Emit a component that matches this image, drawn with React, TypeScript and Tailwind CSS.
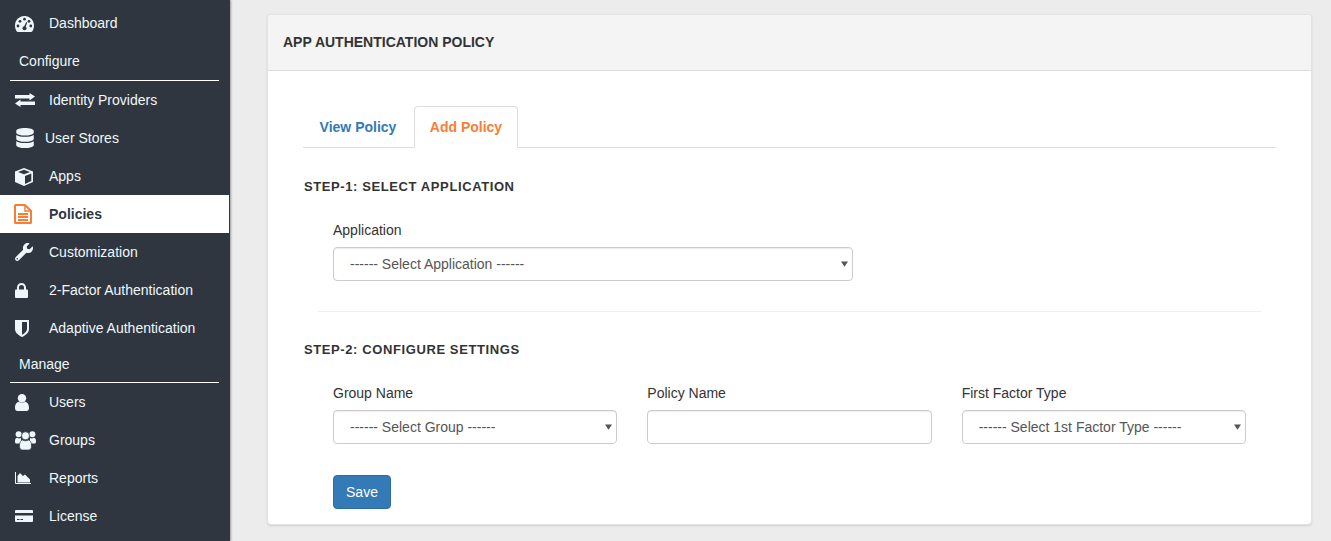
import React from "react";
import { FaDatabase, FaWrench } from "react-icons/fa";

const D = "#2f363f";
const W = "#eef8fc";
const O = "#f97d35";

const Gauge = () => (
  <svg width="19" height="16" viewBox="0 0 19 16" className="mt-[2px]" fill={W}>
    <path d="M9.5 0C15 0 19 4.4 19 9.5c0 2-.5 4-1.6 5.7-.3.5-.8.8-1.4.8H3c-.6 0-1.100-.3-1.400-.8C.5 13.500 0 11.500 0 9.500 0 4.400 4 0 9.500 0Z" />
    <g fill={D}>
      <circle cx="3" cy="10" r="1.400" />
      <circle cx="5" cy="5.300" r="1.400" />
      <circle cx="9.500" cy="3.200" r="1.400" />
      <circle cx="15.800" cy="10" r="1.400" />
      <circle cx="14" cy="5.300" r="1.400" />
      <circle cx="9.500" cy="12.300" r="2" />
      <path d="M8.700 11.500 11.200 6l1 .4-1.900 5.700Z" />
    </g>
  </svg>
);
const Exchange = () => (
  <svg width="20" height="14" viewBox="0 0 20 14" fill={W}>
    <path d="M0 2h14.500V0L20 3.500 14.500 7.500V5.500H0Z" />
    <path d="M20 8.500H5.500V6.500L0 10.500 5.500 14V12H20Z" />
  </svg>
);
const Cube = () => (
  <svg width="18" height="18" viewBox="0 0 18 18" className="mt-[2px]">
    <path fill={W} d="M9 0 18 3.500V14L9 18 0 14V3.500Z" />
    <path fill={D} d="M9 1.700 15 4 9 6.300 3 4ZM10 8l6.300-2.500V13L10 16Z" />
  </svg>
);
const FileDoc = () => (
  <svg width="18" height="20" viewBox="0 0 18 20" fill="none" stroke={O} strokeWidth="2">
    <path d="M1 1.500a.5.5 0 0 1 .5-.5H11l6 6v11.500a.5.5 0 0 1-.5.5h-15a.5.5 0 0 1-.5-.5Z" fill="#fff" />
    <path d="M11 1v6h6" strokeWidth="1.500" />
    <path d="M4 10h10M4 13h10M4 16h10" strokeWidth="2" />
  </svg>
);
const Lock = () => (
  <svg width="13" height="15" viewBox="0 0 13 15" fill={W}>
    <path d="M3 7V4.500a3.500 3.500 0 0 1 7 0V7" fill="none" stroke={W} strokeWidth="2" />
    <rect x="0" y="6.500" width="13" height="8.500" rx="1" />
  </svg>
);
const Shield = () => (
  <svg width="14" height="17" viewBox="0 0 14 17" className="mt-[1px]">
    <path fill={W} d="M0 0H14V9C14 13 10 15.500 7 17 4 15.500 0 13 0 9Z" />
    <path fill={D} d="M7 2H12V9C12 11.500 9.500 13.500 7 14.800Z" />
  </svg>
);
const User = () => (
  <svg width="14" height="17" viewBox="0 0 14 17" fill={W} className="mt-[1px]">
    <circle cx="7" cy="4.200" r="4.200" />
    <path d="M0 14C0 10 2 8 4 7.800 5 9 9 9 10 7.800 12 8 14 10 14 14 14 16 13 17 11.500 17H2.500C1 17 0 16 0 14Z" />
  </svg>
);
const Users = () => (
  <svg width="21" height="19" viewBox="0 0 21 19" fill={W} className="mt-[1px]">
    <circle cx="3.600" cy="3.200" r="3" />
    <circle cx="17.400" cy="3.200" r="3" />
    <path d="M0 10C0 8 1 6.800 2.500 6.800 3.500 7.600 4.500 7.600 6 7L6 12.500H1.500C.5 12.500 0 11.800 0 11Z" />
    <path d="M21 10C21 8 20 6.800 18.500 6.800 17.500 7.600 16.500 7.600 15 7L15 12.500H19.500C20.500 12.500 21 11.800 21 11Z" />
    <circle cx="10.500" cy="4.800" r="4" stroke={D} strokeWidth=".7" />
    <path d="M4.500 15C4.500 11 6 9 7.500 9 9 10 12 10 13.500 9 15 9 16.500 11 16.500 15 16.500 17.500 15.500 19 13.500 19H7.500C5.500 19 4.500 17.500 4.500 15Z" stroke={D} strokeWidth=".7" />
  </svg>
);
const Chart = () => (
  <svg width="16" height="12" viewBox="0 0 16 12" fill={W}>
    <path d="M.5 0V11.500H16" fill="none" stroke={W} strokeWidth="1" />
    <path d="M2.500 10.500V4L5 1 8 4 10 2.500 15 7.500V10.500Z" />
  </svg>
);
const Card = () => (
  <svg width="18" height="12" viewBox="0 0 18 12" fill={W}>
    <path d="M0 1a1 1 0 0 1 1-1H17a1 1 0 0 1 1 1V3H0Z" />
    <path d="M0 5.500H18V11a1 1 0 0 1-1 1H1a1 1 0 0 1-1-1Z" />
    <path d="M2 9.500H4.500M5.500 9.500H8" stroke={D} strokeWidth="1" />
  </svg>
);

function Item({ icon, label, active, slot }: { icon: React.ReactNode; label: string; active?: boolean; slot?: string }) {
  return (
    <div className={`h-[38px] flex items-center ${active ? "bg-white font-bold text-[#2f363f]" : "text-[#eef8fc]"}`}>
      <span className={`shrink-0 flex items-center ${slot ?? "w-[49px] pl-[15px]"}`}>{icon}</span>
      <span>{label}</span>
    </div>
  );
}

function Heading({ label, className }: { label: string; className: string }) {
  return (
    <div className={`mx-[10px] pl-[9px] border-b border-white flex items-center text-[#eef8fc] ${className}`}>{label}</div>
  );
}

function SelectBox({ text, className }: { text: string; className?: string }) {
  return (
    <div className={`relative ${className ?? ""}`}>
      <select defaultValue="" className="appearance-none w-full h-[34px] bg-white border border-[#ccc] rounded-[4px] pl-[16px] pr-6 text-[14px] text-[#555] outline-none shadow-[inset_0_1px_1px_rgba(0,0,0,0.075)]">
        <option value="">{text}</option>
      </select>
      <svg viewBox="0 0 8 6" className="absolute right-[5px] top-[14px] w-[7px] h-[6px] fill-[#555] pointer-events-none">
        <path d="M0 0H8L4 6Z" />
      </svg>
    </div>
  );
}

function Field({ label, children }: { label: string; children: React.ReactNode }) {
  return (
    <div>
      <label className="block h-[20px] mb-[7px] leading-[20px] text-[14px] text-[#333]">{label}</label>
      {children}
    </div>
  );
}

export default function App() {
  return (
    <div className="h-[541px] w-[1331px] overflow-hidden flex bg-[#ececec] text-[14px] leading-[20px] text-[#333] font-['Liberation_Sans',Arial,sans-serif]">
      <aside className="w-[230px] shrink-0 h-full bg-[#2f363f] pt-[4px] border-r border-[#2f363f] shadow-[1px_0_2px_rgba(0,0,0,0.35)]">
        <Item icon={<Gauge />} label="Dashboard" />
        <Heading label="Configure" className="h-[39px]" />
        <Item icon={<Exchange />} label="Identity Providers" />
        <Item icon={<FaDatabase size={20} />} label="User Stores" slot="w-[45px] pl-[15px]" />
        <Item icon={<Cube />} label="Apps" />
        <Item icon={<FileDoc />} label="Policies" active slot="w-[49px] pl-[14px]" />
        <Item icon={<FaWrench size={18} />} label="Customization" />
        <Item icon={<Lock />} label="2-Factor Authentication" />
        <Item icon={<Shield />} label="Adaptive Authentication" />
        <Heading label="Manage" className="h-[36px] pb-[2px]" />
        <Item icon={<User />} label="Users" />
        <Item icon={<Users />} label="Groups" />
        <Item icon={<Chart />} label="Reports" />
        <Item icon={<Card />} label="License" />
      </aside>
      <main className="flex-1 pl-[37px] pr-[19px] pt-[14px]">
        <div className="h-[511px] bg-white rounded-[4px] border border-[#e3e3e3] shadow-[0_1px_2px_rgba(0,0,0,0.12)] overflow-hidden">
          <div className="h-[56px] bg-[#f4f4f4] border-b border-[#ddd] px-[15px] pb-[2px] flex items-center">
            <h1 className="font-bold text-[#333] text-[14px] uppercase">App Authentication Policy</h1>
          </div>
          <div className="px-[35px] pt-[35px]">
            <div className="flex h-[42px] border-b border-[#ddd] pl-[1px] font-bold">
              <div className="w-[108px] mr-[2px] h-[41px] flex items-center justify-center text-[#337ab7]">View Policy</div>
              <div className="w-[104px] h-[42px] -mb-px bg-white border border-[#ddd] border-b-white rounded-t-[4px] flex items-center justify-center text-[#f97d35]">Add Policy</div>
            </div>
            <h2 className="mt-[29px] ml-[1px] h-[20px] font-bold text-[13px] tracking-[0.6px] text-[#333] leading-[20px]">STEP-1: SELECT APPLICATION</h2>
            <div className="mt-[23px] ml-[30px] w-[520px]">
              <Field label="Application"><SelectBox text="------ Select Application ------" /></Field>
            </div>
            <hr className="mt-[30px] mx-[15px] border-t border-[#eee]" />
            <h2 className="mt-[28px] ml-[1px] h-[20px] font-bold text-[13px] tracking-[0.6px] text-[#333] leading-[20px]">STEP-2: CONFIGURE SETTINGS</h2>
            <div className="mt-[23px] ml-[30px] mr-[30px] grid grid-cols-3 gap-x-[30px]">
              <Field label="Group Name"><SelectBox text="------ Select Group ------" /></Field>
              <Field label="Policy Name">
                <input type="text" className="w-full h-[34px] bg-white border border-[#ccc] rounded-[4px] outline-none shadow-[inset_0_1px_1px_rgba(0,0,0,0.075)]" />
              </Field>
              <Field label="First Factor Type"><SelectBox text="------ Select 1st Factor Type ------" /></Field>
            </div>
            <button type="button" className="mt-[31px] ml-[30px] w-[58px] h-[34px] bg-[#337ab7] border border-[#2e6da4] rounded-[4px] text-white text-[14px]">Save</button>
          </div>
        </div>
      </main>
    </div>
  );
}
